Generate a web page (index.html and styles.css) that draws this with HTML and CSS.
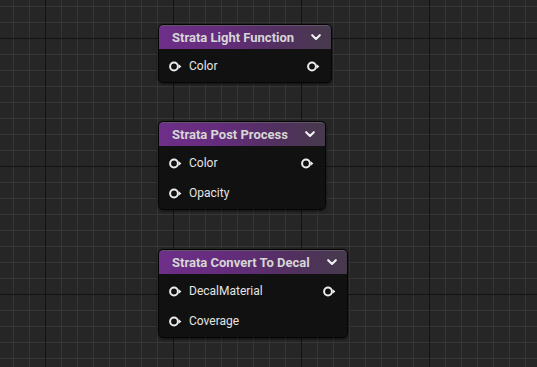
FILE: index.html
```html
<!DOCTYPE html>
<html>
<head>
<meta charset="utf-8">
<link rel="stylesheet" href="styles.css">
</head>
<body>
<div class="canvas">
  <div class="node n1">
    <div class="hdr">
      <span class="title">Strata Light Function</span>
      <svg class="chev" width="10" height="7" viewBox="0 0 10 7"><polyline points="1.2,1.2 5,5 8.8,1.2" fill="none" stroke="#f0f0f0" stroke-width="2.1" stroke-linecap="round" stroke-linejoin="round"/></svg>
    </div>
    <div class="nbody">
      <div class="row">
        <svg class="pin" width="13" height="11" viewBox="0 0 13 11"><circle cx="5" cy="5.5" r="3.9" fill="none" stroke="#ececec" stroke-width="2"/><polygon points="9.7,3.2 12.4,5.5 9.7,7.8" fill="#ececec"/></svg>
        <span class="label">Color</span>
        <svg class="pin out" width="13" height="11" viewBox="0 0 13 11"><circle cx="5" cy="5.5" r="3.9" fill="none" stroke="#ececec" stroke-width="2"/><polygon points="9.7,3.2 12.4,5.5 9.7,7.8" fill="#ececec"/></svg>
      </div>
    </div>
  </div>

  <div class="node n2">
    <div class="hdr">
      <span class="title">Strata Post Process</span>
      <svg class="chev" width="10" height="7" viewBox="0 0 10 7"><polyline points="1.2,1.2 5,5 8.8,1.2" fill="none" stroke="#f0f0f0" stroke-width="2.1" stroke-linecap="round" stroke-linejoin="round"/></svg>
    </div>
    <div class="nbody">
      <div class="row">
        <svg class="pin" width="13" height="11" viewBox="0 0 13 11"><circle cx="5" cy="5.5" r="3.9" fill="none" stroke="#ececec" stroke-width="2"/><polygon points="9.7,3.2 12.4,5.5 9.7,7.8" fill="#ececec"/></svg>
        <span class="label">Color</span>
        <svg class="pin out" width="13" height="11" viewBox="0 0 13 11"><circle cx="5" cy="5.5" r="3.9" fill="none" stroke="#ececec" stroke-width="2"/><polygon points="9.7,3.2 12.4,5.5 9.7,7.8" fill="#ececec"/></svg>
      </div>
      <div class="row">
        <svg class="pin" width="13" height="11" viewBox="0 0 13 11"><circle cx="5" cy="5.5" r="3.9" fill="none" stroke="#ececec" stroke-width="2"/><polygon points="9.7,3.2 12.4,5.5 9.7,7.8" fill="#ececec"/></svg>
        <span class="label">Opacity</span>
      </div>
    </div>
  </div>

  <div class="node n3">
    <div class="hdr">
      <span class="title">Strata Convert To Decal</span>
      <svg class="chev" width="10" height="7" viewBox="0 0 10 7"><polyline points="1.2,1.2 5,5 8.8,1.2" fill="none" stroke="#f0f0f0" stroke-width="2.1" stroke-linecap="round" stroke-linejoin="round"/></svg>
    </div>
    <div class="nbody">
      <div class="row">
        <svg class="pin" width="13" height="11" viewBox="0 0 13 11"><circle cx="5" cy="5.5" r="3.9" fill="none" stroke="#ececec" stroke-width="2"/><polygon points="9.7,3.2 12.4,5.5 9.7,7.8" fill="#ececec"/></svg>
        <span class="label">DecalMaterial</span>
        <svg class="pin out" width="13" height="11" viewBox="0 0 13 11"><circle cx="5" cy="5.5" r="3.9" fill="none" stroke="#ececec" stroke-width="2"/><polygon points="9.7,3.2 12.4,5.5 9.7,7.8" fill="#ececec"/></svg>
      </div>
      <div class="row">
        <svg class="pin" width="13" height="11" viewBox="0 0 13 11"><circle cx="5" cy="5.5" r="3.9" fill="none" stroke="#ececec" stroke-width="2"/><polygon points="9.7,3.2 12.4,5.5 9.7,7.8" fill="#ececec"/></svg>
        <span class="label">Coverage</span>
      </div>
    </div>
  </div>
</div>
</body>
</html>
```
FILE: styles.css
```css
html, body {
  margin: 0;
  padding: 0;
  width: 537px;
  height: 367px;
  overflow: hidden;
}
body {
  background-color: #262626;
  font-family: Roboto, "Liberation Sans", sans-serif;
}
.canvas {
  position: relative;
  width: 537px;
  height: 367px;
  background-image:
    linear-gradient(to right, #131313 1px, transparent 1px),
    linear-gradient(to bottom, #131313 1px, transparent 1px),
    linear-gradient(to right, #363636 1px, transparent 1px),
    linear-gradient(to bottom, #363636 1px, transparent 1px);
  background-size: 128px 128px, 128px 128px, 16px 16px, 16px 16px;
  background-position: 45px 0, 0 38px, 13px 0, 0 6px;
}
.node {
  position: absolute;
  left: 158px;
  display: flex;
  flex-direction: column;
  border: 1px solid #050505;
  border-radius: 5px;
  background: rgba(17, 17, 17, 0.96);
  box-shadow: 0 1px 3px rgba(0, 0, 0, 0.6);
  overflow: hidden;
}
.n1 { top: 24px; }
.n2 { top: 121px; }
.n3 { top: 249px; }
.hdr {
  height: 23px;
  display: flex;
  align-items: center;
  padding: 0 10px 0 13px;
  gap: 17px;
  background: linear-gradient(to right, #6e2f88 0%, #652c7d 35%, #523060 70%, #463a4c 100%);
  border-top: 1px solid #64546a;
  border-radius: 4px 4px 0 0;
}
.title {
  flex: 1;
  color: #d6d6d6;
  font-size: 13px;
  font-weight: bold;
  white-space: nowrap;
}
.chev {
  display: block;
}
.nbody {
  padding: 2px 0 1px;
}
.row {
  height: 30px;
  display: flex;
  align-items: center;
  padding: 0 11px 0 10px;
}
.pin {
  display: block;
  flex: none;
}
.label {
  margin-left: 7px;
  flex: 1;
  color: #e4e4e4;
  font-size: 12px;
  white-space: nowrap;
}
```
